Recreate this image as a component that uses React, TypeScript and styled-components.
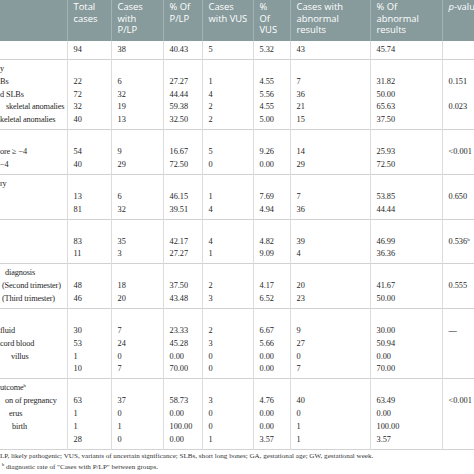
import React from "react";
import styled, { createGlobalStyle } from "styled-components";

const Global = createGlobalStyle`
  html, body { margin: 0; padding: 0; background: #ffffff; }
`;

const Page = styled.div`
  width: 474px;
  height: 474px;
  overflow: hidden;
  background: #ffffff;
`;

const Table = styled.table`
  border-collapse: collapse;
  table-layout: fixed;
  width: 482px;
`;

const HeadRow = styled.tr`
  background: #879b9c;
  height: 41px;
`;

const HeadCell = styled.th`
  vertical-align: top;
  text-align: left;
  padding: 1px 0 0 6px;
  font-family: "Open Sans", "Liberation Sans", sans-serif;
  font-weight: 400;
  font-size: 9.4px;
  line-height: 11.5px;
  color: #ffffff;
  white-space: nowrap;
  overflow: hidden;
  border-left: 1px solid #a3b3b4;
  &:first-child { border-left: none; }
`;

const SectionRow = styled.tr`
  border-bottom: 1px solid #d2d2d2;
`;

const Cell = styled.td`
  vertical-align: top;
  padding: 3px 0 2.3px 6px;
  font-family: "Liberation Serif", "DejaVu Serif", serif;
  font-size: 8.3px;
  line-height: 12.8px;
  color: #262626;
  white-space: nowrap;
  overflow: hidden;
  border-left: 1px solid #dcdcdc;
`;

const LabelCell = styled(Cell)`
  padding-left: 0;
  border-left: none;
  letter-spacing: -0.15px;
`;

const Line = styled.div`
  height: 12.8px;
`;

const LabelLine = styled.div<{ $indent: number }>`
  height: 12.8px;
  margin-left: ${(p) => p.$indent}px;
`;

const Sup = styled.sup`
  font-size: 5px;
  line-height: 0;
  vertical-align: 3px;
`;

const Notes = styled.div`
  padding-top: 1px;
  font-family: "Liberation Serif", "DejaVu Serif", serif;
  font-size: 7.1px;
  line-height: 11px;
  color: #333333;
  white-space: nowrap;
`;

type Row = { label?: React.ReactNode; indent?: number; values: React.ReactNode[] };

const headers: string[][] = [
  [],
  ["Total", "cases"],
  ["Cases", "with", "P/LP"],
  ["% Of", "P/LP"],
  ["Cases", "with VUS"],
  ["%", "Of", "VUS"],
  ["Cases with", "abnormal", "results"],
  ["% Of", "abnormal", "results"],
];

const widths = [67, 44, 52, 39, 51, 37, 80, 72, 40];

const b = <Sup>b</Sup>;

const sections: Row[][] = [
  [{ values: ["94", "38", "40.43", "5", "5.32", "43", "45.74", ""] }],
  [
    { label: "y", indent: 0, values: ["", "", "", "", "", "", "", ""] },
    { label: "Bs", indent: 0, values: ["22", "6", "27.27", "1", "4.55", "7", "31.82", "0.151"] },
    { label: "d SLBs", indent: 0, values: ["72", "32", "44.44", "4", "5.56", "36", "50.00", ""] },
    { label: "skeletal anomalies", indent: 6, values: ["32", "19", "59.38", "2", "4.55", "21", "65.63", "0.023"] },
    { label: "skeletal anomalies", indent: -3, values: ["40", "13", "32.50", "2", "5.00", "15", "37.50", ""] },
  ],
  [
    { label: "", values: ["", "", "", "", "", "", "", ""] },
    { label: "ore ≥ −4", indent: 0, values: ["54", "9", "16.67", "5", "9.26", "14", "25.93", "<0.001"] },
    { label: "−4", indent: 0, values: ["40", "29", "72.50", "0", "0.00", "29", "72.50", ""] },
  ],
  [
    { label: "ry", indent: 0, values: ["", "", "", "", "", "", "", ""] },
    { label: "", values: ["13", "6", "46.15", "1", "7.69", "7", "53.85", "0.650"] },
    { label: "", values: ["81", "32", "39.51", "4", "4.94", "36", "44.44", ""] },
  ],
  [
    { label: "", values: ["", "", "", "", "", "", "", ""] },
    { label: "", values: ["83", "35", "42.17", "4", "4.82", "39", "46.99", <>0.536{b}</>] },
    { label: "", values: ["11", "3", "27.27", "1", "9.09", "4", "36.36", ""] },
  ],
  [
    { label: "diagnosis", indent: 5, values: ["", "", "", "", "", "", "", ""] },
    { label: "(Second trimester)", indent: 2, values: ["48", "18", "37.50", "2", "4.17", "20", "41.67", "0.555"] },
    { label: "(Third trimester)", indent: 2, values: ["46", "20", "43.48", "3", "6.52", "23", "50.00", ""] },
  ],
  [
    { label: "", values: ["", "", "", "", "", "", "", ""] },
    { label: "fluid", indent: 0, values: ["30", "7", "23.33", "2", "6.67", "9", "30.00", "—"] },
    { label: "cord blood", indent: 0, values: ["53", "24", "45.28", "3", "5.66", "27", "50.94", ""] },
    { label: "villus", indent: 11, values: ["1", "0", "0.00", "0", "0.00", "0", "0.00", ""] },
    { label: "", values: ["10", "7", "70.00", "0", "0.00", "7", "70.00", ""] },
  ],
  [
    { label: <>utcome{b}</>, indent: 0, values: ["", "", "", "", "", "", "", ""] },
    { label: "on of pregnancy", indent: 5, values: ["63", "37", "58.73", "3", "4.76", "40", "63.49", "<0.001"] },
    { label: "erus", indent: 9, values: ["1", "0", "0.00", "0", "0.00", "0", "0.00", ""] },
    { label: "birth", indent: 12, values: ["1", "1", "100.00", "0", "0.00", "1", "100.00", ""] },
    { label: "", values: ["28", "0", "0.00", "1", "3.57", "1", "3.57", ""] },
  ],
];

function Section({ rows }: { rows: Row[] }) {
  return (
    <SectionRow>
      <LabelCell>
        {rows.map((r, i) => (
          <LabelLine key={i} $indent={r.indent ?? 0}>
            {r.label}
          </LabelLine>
        ))}
      </LabelCell>
      {Array.from({ length: 8 }).map((_, c) => (
        <Cell key={c}>
          {rows.map((r, i) => (
            <Line key={i}>{r.values[c]}</Line>
          ))}
        </Cell>
      ))}
    </SectionRow>
  );
}

export default function App() {
  return (
    <Page>
      <Global />
      <Table>
        <colgroup>
          {widths.map((w, i) => (
            <col key={i} style={{ width: w }} />
          ))}
        </colgroup>
        <thead>
          <HeadRow>
            {headers.map((h, i) => (
              <HeadCell key={i}>
                {h.map((l, j) => (
                  <div key={j}>{l}</div>
                ))}
              </HeadCell>
            ))}
            <HeadCell>
              <i>p</i>-value
            </HeadCell>
          </HeadRow>
        </thead>
        <tbody>
          {sections.map((s, i) => (
            <Section key={i} rows={s} />
          ))}
        </tbody>
      </Table>
      <Notes>
        <div>LP, likely pathogenic; VUS, variants of uncertain significance; SLBs, short long bones; GA, gestational age; GW, gestational week.</div>
        <div>
          &nbsp;{b} diagnostic rate of "Cases with P/LP" between groups.
        </div>
      </Notes>
    </Page>
  );
}
